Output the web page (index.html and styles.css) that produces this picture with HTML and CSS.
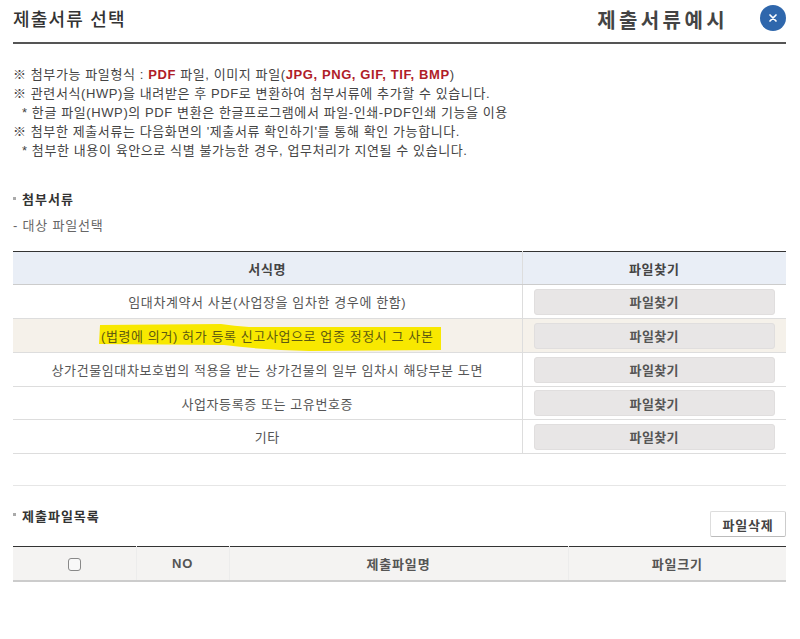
FILE: index.html
```html
<!DOCTYPE html>
<html lang="ko">
<head>
    <meta charset="UTF-8">
    <meta name="viewport" content="width=device-width, initial-scale=1.0">
    <title>제출서류 선택</title>
    <link rel="stylesheet" href="styles.css">
</head>

<body>
    <div class="popup">
        <div class="popup-header">
            <h1 class="popup-title">제출서류 선택</h1>
            <div class="popup-example">제출서류예시</div>
            <button class="close-btn" aria-label="닫기">
                <svg viewBox="0 0 10 10" width="10" height="10">
                    <path d="M2 2 L8 8 M8 2 L2 8" stroke="#fff" stroke-width="1.7" stroke-linecap="round"/>
                </svg>
            </button>
        </div>

        <!-- 안내문 -->
        <div class="notes">
            <p>※ 첨부가능 파일형식 : <b>PDF</b> 파일, 이미지 파일(<b>JPG, PNG, GIF, TIF, BMP</b>)</p>
            <p>※ 관련서식(HWP)을 내려받은 후 PDF로 변환하여 첨부서류에 추가할 수 있습니다.</p>
            <p class="sub">* 한글 파일(HWP)의 PDF 변환은 한글프로그램에서 파일-인쇄-PDF인쇄 기능을 이용</p>
            <p>※ 첨부한 제출서류는 다음화면의 '제출서류 확인하기'를 통해 확인 가능합니다.</p>
            <p class="sub">* 첨부한 내용이 육안으로 식별 불가능한 경우, 업무처리가 지연될 수 있습니다.</p>
        </div>

        <h2 class="section-title attach-title">첨부서류</h2>
        <div class="section-desc">- 대상 파일선택</div>

        <table class="doc-table">
            <thead>
                <tr>
                    <th>서식명</th>
                    <th class="col-find">파일찾기</th>
                </tr>
            </thead>
            <tbody>
                <tr>
                    <td>임대차계약서 사본(사업장을 임차한 경우에 한함)</td>
                    <td class="col-find"><button class="find-btn">파일찾기</button></td>
                </tr>
                <tr class="marked">
                    <td>
                        <span class="highlight">
                            <svg class="highlight-ink" viewBox="0 0 342 27" preserveAspectRatio="none">
                                <path d="M1 1 L122 0 Q135 2 150 3 L342 3 L342 26 L210 27 Q165 26 125 21 L0 20 Z" fill="#f8e800"/>
                            </svg>
                            <span class="highlight-text">(법령에 의거) 허가 등록 신고사업으로 업종 정정시 그 사본</span>
                        </span>
                    </td>
                    <td class="col-find"><button class="find-btn">파일찾기</button></td>
                </tr>
                <tr>
                    <td>상가건물임대차보호법의 적용을 받는 상가건물의 일부 임차시 해당부분 도면</td>
                    <td class="col-find"><button class="find-btn">파일찾기</button></td>
                </tr>
                <tr class="short-row">
                    <td>사업자등록증 또는 고유번호증</td>
                    <td class="col-find"><button class="find-btn">파일찾기</button></td>
                </tr>
                <tr>
                    <td>기타</td>
                    <td class="col-find"><button class="find-btn">파일찾기</button></td>
                </tr>
            </tbody>
        </table>

        <div class="divider"></div>

        <div class="list-head">
            <h2 class="section-title">제출파일목록</h2>
            <button class="delete-btn">파일삭제</button>
        </div>

        <table class="file-table">
            <thead>
                <tr>
                    <th class="col-check"><span class="checkbox"></span></th>
                    <th class="col-no">NO</th>
                    <th>제출파일명</th>
                    <th class="col-size">파일크기</th>
                </tr>
            </thead>
        </table>
    </div>
</body>
</html>
```

FILE: styles.css
```css
* {
    margin: 0;
    padding: 0;
    box-sizing: border-box;
}

body {
    font-family: "Liberation Sans", "Noto Sans CJK KR", sans-serif;
    font-size: 13px;
    color: #444;
    background: #fff;
    width: 800px;
    height: 639px;
    overflow: hidden;
}

.popup {
    padding: 0 14px 0 13px;
}

/* 상단 제목 */
.popup-header {
    display: flex;
    align-items: center;
    height: 44px;
    border-bottom: 2px solid #555;
    padding-bottom: 6px;
}

.popup-title {
    flex: 1;
    font-size: 18px;
    font-weight: 500;
    color: #333;
    letter-spacing: 1.2px;
}

.popup-example {
    font-size: 20px;
    font-weight: 700;
    color: #444;
    letter-spacing: 3.4px;
    margin-top: 3px;
    margin-right: 32px;
}

.close-btn {
    width: 26px;
    height: 26px;
    border: none;
    border-radius: 50%;
    background: #2f67ac;
    display: flex;
    align-items: center;
    justify-content: center;
}

/* 안내문 */
.notes {
    margin-top: 21px;
    line-height: 19px;
    letter-spacing: 0.6px;
    color: #444;
}

.notes b {
    color: #b01d28;
    font-weight: 700;
}

.notes .sub {
    padding-left: 9px;
}

.section-title {
    font-size: 13px;
    font-weight: 700;
    color: #333;
    letter-spacing: 1px;
    padding-left: 9px;
    position: relative;
}

.section-title::before {
    content: "";
    position: absolute;
    left: 0;
    top: 7px;
    width: 3px;
    height: 3px;
    background: #aaa;
}

.attach-title {
    margin-top: 30px;
    line-height: 20px;
}

.section-desc {
    margin-top: 6px;
    line-height: 20px;
    letter-spacing: 0.8px;
    color: #666;
}

/* 표 */
table {
    width: 100%;
    border-collapse: collapse;
    table-layout: fixed;
}

.doc-table {
    margin-top: 15px;
    border-top: 1px solid #333;
}

.doc-table th {
    height: 33px;
    background: #e9eef6;
    border-bottom: 1px solid #ccc;
    font-size: 13px;
    font-weight: 700;
    color: #444;
    letter-spacing: 0.7px;
}

.doc-table td {
    height: 34px;
    border-bottom: 1px solid #ddd;
    text-align: center;
    letter-spacing: 0.6px;
    color: #555;
}

.doc-table tr.short-row td {
    height: 33px;
}

.col-find {
    width: 264px;
    border-left: 1px solid #ddd;
}

.doc-table tr.marked td {
    background: #f5f1ea;
}

.find-btn {
    display: block;
    width: 241px;
    height: 26px;
    margin: 0 auto;
    border: 1px solid #e0dede;
    border-radius: 3px;
    background: #e8e6e6;
    font-family: inherit;
    font-size: 13px;
    font-weight: 700;
    color: #555;
    letter-spacing: 0.4px;
}

/* 노란 형광펜 표시 */
.highlight {
    position: relative;
    display: inline-block;
}

.highlight-ink {
    position: absolute;
    left: -2px;
    top: -2px;
    width: 342px;
    height: 27px;
}

.highlight-text {
    position: relative;
    color: #5d5a10;
}

.divider {
    margin-top: 31px;
    border-top: 1px solid #e6e6e6;
}

.list-head {
    display: flex;
    align-items: center;
    justify-content: space-between;
    margin-top: 25px;
}

.list-head .section-title {
    margin-top: -17px;
}

.delete-btn {
    width: 76px;
    height: 26px;
    border: 1px solid #ddd;
    border-bottom-color: #bbb;
    border-right-color: #ccc;
    border-radius: 2px;
    background: #fff;
    font-family: inherit;
    font-size: 13px;
    font-weight: 700;
    color: #444;
    letter-spacing: 0.8px;
}

.file-table {
    margin-top: 9px;
    border-top: 1px solid #333;
}

.file-table th {
    height: 34px;
    background: #f4f3f2;
    border-bottom: 2px solid #ccc;
    border-left: 1px solid #ececec;
    font-size: 13px;
    font-weight: 700;
    color: #555;
    letter-spacing: 0.8px;
}

.file-table th:first-child {
    border-left: none;
}

.col-check {
    width: 123px;
}

.col-no {
    width: 93px;
}

.col-size {
    width: 218px;
}

.checkbox {
    display: inline-block;
    width: 13px;
    height: 13px;
    border: 1.5px solid #888;
    border-radius: 3px;
    background: #f8f8f8;
    vertical-align: middle;
}
```
